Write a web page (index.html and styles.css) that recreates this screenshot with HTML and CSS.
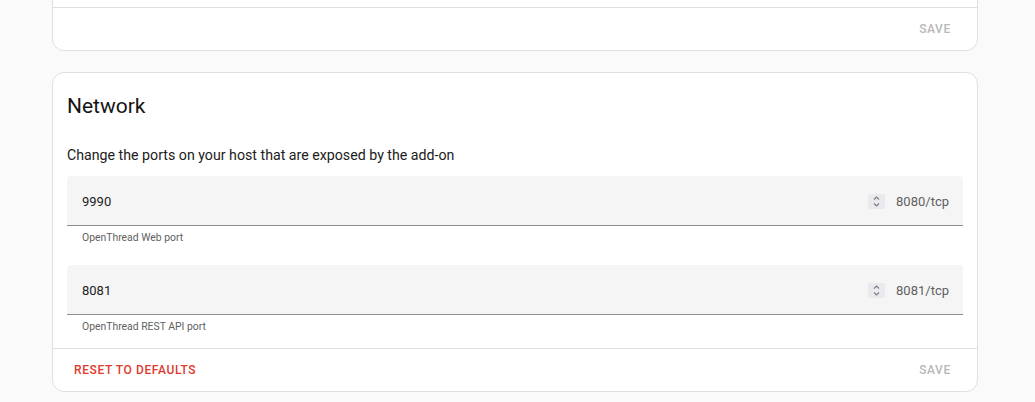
FILE: index.html
```html
<!DOCTYPE html>
<html lang="en">
<head>
<meta charset="utf-8">
<title>Network</title>
<link rel="stylesheet" href="styles.css">
</head>
<body>
<div class="page">
  <section class="card card-prev">
    <div class="card-content prev-content"></div>
    <div class="card-actions">
      <span></span>
      <button class="btn btn-disabled">Save</button>
    </div>
  </section>

  <section class="card">
    <h1 class="card-header">Network</h1>
    <div class="card-content">
      <p class="description">Change the ports on your host that are exposed by the add-on</p>
      <div class="field-group">
        <div class="field">
          <span class="field-value">9990</span>
          <span class="spinner">
            <svg width="17" height="15" viewBox="0 0 17 15"><path d="M6 5.5 L8.5 3 L11 5.5 M6 9.5 L8.5 12 L11 9.5" fill="none" stroke="#7a7a80" stroke-width="1.1"/></svg>
          </span>
          <span class="field-suffix">8080/tcp</span>
        </div>
        <div class="helper">OpenThread Web port</div>
      </div>
      <div class="field-group">
        <div class="field">
          <span class="field-value">8081</span>
          <span class="spinner">
            <svg width="17" height="15" viewBox="0 0 17 15"><path d="M6 5.5 L8.5 3 L11 5.5 M6 9.5 L8.5 12 L11 9.5" fill="none" stroke="#7a7a80" stroke-width="1.1"/></svg>
          </span>
          <span class="field-suffix">8081/tcp</span>
        </div>
        <div class="helper">OpenThread REST API port</div>
      </div>
    </div>
    <div class="card-actions">
      <button class="btn btn-warning">Reset to defaults</button>
      <button class="btn btn-disabled">Save</button>
    </div>
  </section>
</div>
</body>
</html>
```

FILE: styles.css
```css
html, body {
  margin: 0;
  padding: 0;
  background: #fafafa;
  font-family: Roboto, "Liberation Sans", sans-serif;
  color: #212121;
  overflow: hidden;
}

.page {
  width: 926px;
  margin-left: 52px;
  display: flex;
  flex-direction: column;
  gap: 21px;
}

.card {
  background: #fff;
  border: 1px solid #e0e0e0;
  border-radius: 12px;
  box-sizing: border-box;
}

.card-prev {
  margin-top: -39px;
}

.prev-content {
  height: 46px;
  box-sizing: border-box;
}

.card-header {
  margin: 0;
  padding: 17px 14px 0;
  font-size: 21px;
  font-weight: 400;
  line-height: 32px;
  color: #141414;
}

.card-content {
  padding: 0 14px 9px;
  border-bottom: 1px solid #e0e0e0;
}

.description {
  margin: 23px 0 11px;
  font-size: 14.2px;
  line-height: 20px;
  color: #212121;
}

.field-group {
  margin-bottom: 15px;
}

.field-group:last-child {
  margin-bottom: 0;
}

.field {
  height: 50px;
  box-sizing: border-box;
  background: #f5f5f5;
  border-radius: 4px 4px 0 0;
  border-bottom: 1px solid #8f8f8f;
  display: flex;
  align-items: center;
  padding: 1px 14px 0 15px;
}

.field-value {
  flex: 1;
  font-size: 13px;
  color: #212121;
}

.spinner {
  width: 17px;
  height: 15px;
  background: #e9e9ee;
  border-radius: 2px;
  display: flex;
  margin-right: 11px;
}

.field-suffix {
  font-size: 13px;
  color: #5f5f5f;
}

.helper {
  padding: 4px 0 0 15px;
  height: 24px;
  box-sizing: border-box;
  font-size: 10.4px;
  line-height: 16px;
  color: #616161;
}

.card-actions {
  height: 42px;
  display: flex;
  align-items: center;
  justify-content: space-between;
  padding: 0 13px;
}

.btn {
  border: none;
  background: none;
  font-family: Roboto, "Liberation Sans", sans-serif;
  font-size: 12px;
  font-weight: 500;
  letter-spacing: 0.6px;
  text-transform: uppercase;
  padding: 0 8px;
  height: 32px;
  min-width: 58px;
}

.btn-warning {
  color: #df3a2e;
}

.btn-disabled {
  color: #b8b8b8;
}
```
